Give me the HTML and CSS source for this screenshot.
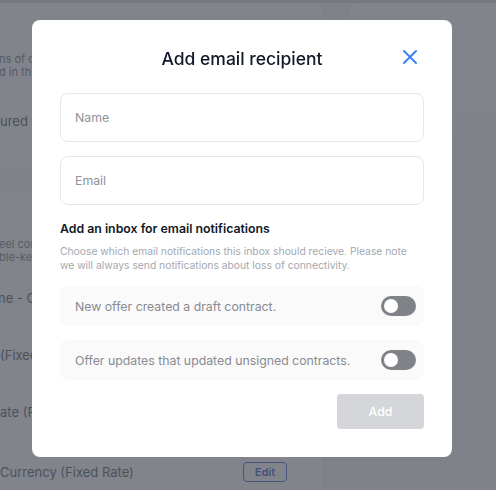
FILE: index.html
```html
<!DOCTYPE html>
<html lang="en">
<head>
    <meta charset="UTF-8">
    <meta name="viewport" content="width=device-width, initial-scale=1.0">
    <title>Notification Settings</title>
    <link rel="stylesheet" href="styles.css">
</head>
<body>
    <div class="topbar"></div>
    <div class="page">
        <div class="settings-panel">
            <div class="section top-section">
                <div class="clip">
                    <p class="small">ns of calc</p>
                    <p class="small">d in this</p>
                    <p class="row-label first">ured al</p>
                </div>
            </div>
            <div class="band"></div>
            <div class="section lower-section">
                <div class="clip">
                    <p class="small">eel conn</p>
                    <p class="small">ble-keys</p>
                    <p class="row-label label-first">ne - Cur</p>
                    <p class="row-label label-next">(Fixed</p>
                    <p class="row-label label-next">ate (Fix</p>
                </div>
                <div class="row-edit">
                    <p class="row-label">Currency (Fixed Rate)</p>
                    <button class="edit-btn">Edit</button>
                </div>
            </div>
        </div>
        <div class="side">
            <div class="side-card"></div>
            <div class="side-band"></div>
        </div>
    </div>

    <div class="overlay"></div>

    <div class="modal">
        <div class="modal-header">
            <h2>Add email recipient</h2>
            <button class="close-btn" aria-label="Close">
                <svg width="14" height="14" viewBox="0 0 14 14">
                    <path d="M1 1 L13 13 M13 1 L1 13" stroke="#3b82f6" stroke-width="2" stroke-linecap="round"/>
                </svg>
            </button>
        </div>

        <input type="text" class="field" placeholder="Name">
        <input type="text" class="field" placeholder="Email">

        <h3 class="inbox-title">Add an inbox for email notifications</h3>
        <p class="inbox-desc">Choose which email notifications this inbox should recieve. Please note<br>we will always send notifications about loss of connectivity.</p>

        <div class="toggle-row">
            <span>New offer created a draft contract.</span>
            <span class="switch"><span class="knob"></span></span>
        </div>
        <div class="toggle-row">
            <span>Offer updates that updated unsigned contracts.</span>
            <span class="switch"><span class="knob"></span></span>
        </div>

        <div class="actions">
            <button class="add-btn" disabled>Add</button>
        </div>
    </div>
</body>
</html>
```

FILE: styles.css
```css
* {
    margin: 0;
    padding: 0;
    box-sizing: border-box;
}

body {
    font-family: Inter, "Noto Sans", sans-serif;
    background: #f3f4f6;
    color: #374151;
    width: 496px;
    height: 490px;
    overflow: hidden;
}

/* page behind the dialog */
.topbar {
    height: 3px;
    background: #d9dbe0;
}

.page {
    display: flex;
    gap: 28px;
}

.settings-panel {
    width: 322px;
    background: #ffffff;
    border-radius: 0 8px 0 0;
    height: 487px;
}

.section {
    padding-top: 50px;
}

.clip {
    width: 32px;
    overflow: hidden;
}

.small {
    font-size: 11px;
    line-height: 13px;
    color: #6b7280;
    margin-left: -1px;
    white-space: nowrap;
}

.row-label {
    font-size: 13px;
    line-height: 16px;
    color: #4b5563;
    white-space: nowrap;
}

.first {
    margin-top: 34px;
}

.band {
    height: 22px;
    background: #f5f6f8;
    margin-top: 40px;
}

.lower-section {
    padding-top: 47px;
}

.label-first {
    margin-top: 26px;
    margin-left: -2px;
}

.label-next {
    margin-top: 41px;
}

.row-edit {
    display: flex;
    align-items: center;
    justify-content: space-between;
    width: 287px;
    margin-top: 42px;
}

.edit-btn {
    width: 44px;
    height: 20px;
    border: 1px solid #3b5bdb;
    border-radius: 4px;
    background: transparent;
    color: #2f55d4;
    font-family: inherit;
    font-size: 11px;
    font-weight: 600;
}

.side {
    flex: 1;
}

.side-card {
    height: 110px;
    background: #ffffff;
    border-radius: 8px 0 0 0;
}

.side-band {
    height: 20px;
    background: #f9fafb;
}

.overlay {
    position: fixed;
    inset: 0;
    background: rgba(75, 80, 88, 0.7);
}

/* dialog */
.modal {
    position: fixed;
    left: 32px;
    top: 20px;
    width: 420px;
    height: 437px;
    background: #ffffff;
    border-radius: 8px;
    padding: 0 28px;
    display: flex;
    flex-direction: column;
}

.modal-header {
    height: 73px;
    display: flex;
    align-items: center;
    justify-content: center;
    position: relative;
    padding-top: 3px;
}

.modal-header h2 {
    font-size: 17.5px;
    font-weight: 500;
    color: #111827;
}

.close-btn {
    position: absolute;
    right: 7px;
    top: 30px;
    border: none;
    background: none;
    width: 14px;
    height: 14px;
    display: flex;
}

.field {
    height: 49px;
    border: 1px solid #e5e7eb;
    border-radius: 8px;
    padding: 0 14px;
    font-family: inherit;
    font-size: 12.3px;
    color: #111827;
    outline: none;
}

.field::placeholder {
    color: #8e939a;
}

.field + .field {
    margin-top: 14px;
}

.inbox-title {
    margin-top: 15px;
    font-size: 12.3px;
    line-height: 18px;
    font-weight: 600;
    color: #111827;
}

.inbox-desc {
    margin-top: 6px;
    font-size: 10.3px;
    line-height: 14px;
    color: #a3a8b0;
    white-space: nowrap;
}

.toggle-row {
    margin-top: 14px;
    height: 40px;
    background: #fafafa;
    border-radius: 8px;
    padding: 0 8px 0 15px;
    display: flex;
    align-items: center;
    justify-content: space-between;
    font-size: 12.3px;
    color: #878b92;
}

.switch {
    width: 35px;
    height: 20px;
    border-radius: 10px;
    background: #7f8388;
    display: flex;
    align-items: center;
    padding-left: 3px;
}

.knob {
    width: 14px;
    height: 14px;
    border-radius: 50%;
    background: #ffffff;
}

.actions {
    margin-top: 14px;
    display: flex;
    justify-content: flex-end;
}

.add-btn {
    width: 87px;
    height: 35px;
    border: none;
    border-radius: 4px;
    background: #d4d6d9;
    color: #ffffff;
    font-family: inherit;
    font-size: 12.3px;
    font-weight: 500;
}
```
